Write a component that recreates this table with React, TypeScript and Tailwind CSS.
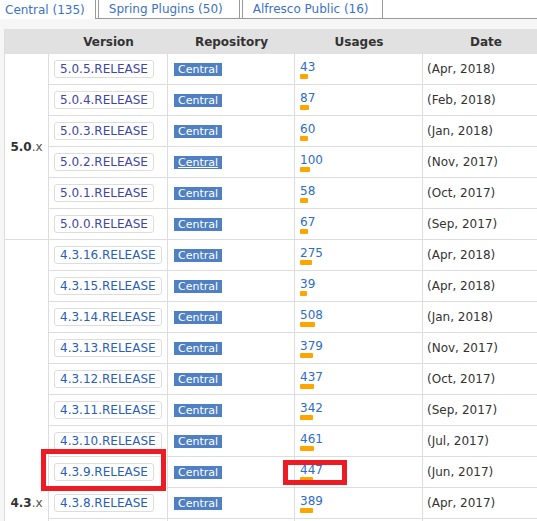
import React from "react";

type Row = { v: string; u: number; w: number; d: string };

const g50: Row[] = [
  { v: "5.0.5.RELEASE", u: 43, w: 8, d: "(Apr, 2018)" },
  { v: "5.0.4.RELEASE", u: 87, w: 9, d: "(Feb, 2018)" },
  { v: "5.0.3.RELEASE", u: 60, w: 8, d: "(Jan, 2018)" },
  { v: "5.0.2.RELEASE", u: 100, w: 10, d: "(Nov, 2017)" },
  { v: "5.0.1.RELEASE", u: 58, w: 8, d: "(Oct, 2017)" },
  { v: "5.0.0.RELEASE", u: 67, w: 8, d: "(Sep, 2017)" },
];

const g43: Row[] = [
  { v: "4.3.16.RELEASE", u: 275, w: 12, d: "(Apr, 2018)" },
  { v: "4.3.15.RELEASE", u: 39, w: 7, d: "(Apr, 2018)" },
  { v: "4.3.14.RELEASE", u: 508, w: 15, d: "(Jan, 2018)" },
  { v: "4.3.13.RELEASE", u: 379, w: 13, d: "(Nov, 2017)" },
  { v: "4.3.12.RELEASE", u: 437, w: 14, d: "(Oct, 2017)" },
  { v: "4.3.11.RELEASE", u: 342, w: 13, d: "(Sep, 2017)" },
  { v: "4.3.10.RELEASE", u: 461, w: 14, d: "(Jul, 2017)" },
  { v: "4.3.9.RELEASE", u: 447, w: 13, d: "(Jun, 2017)" },
  { v: "4.3.8.RELEASE", u: 389, w: 13, d: "(Apr, 2017)" },
  { v: "4.3.7.RELEASE", u: 412, w: 14, d: "(Mar, 2017)" },
  { v: "4.3.6.RELEASE", u: 520, w: 15, d: "(Jan, 2017)" },
  { v: "4.3.5.RELEASE", u: 301, w: 12, d: "(Dec, 2016)" },
  { v: "4.3.4.RELEASE", u: 388, w: 13, d: "(Nov, 2016)" },
  { v: "4.3.3.RELEASE", u: 196, w: 11, d: "(Sep, 2016)" },
  { v: "4.3.2.RELEASE", u: 349, w: 13, d: "(Jul, 2016)" },
  { v: "4.3.1.RELEASE", u: 215, w: 12, d: "(Jul, 2016)" },
  { v: "4.3.0.RELEASE", u: 248, w: 12, d: "(Jun, 2016)" },
];

function Group({
  major,
  rows,
  visited,
  hoverIndex,
}: {
  major: string;
  rows: Row[];
  visited: boolean;
  hoverIndex?: number;
}) {
  return (
    <div className="flex">
      <div className="w-[44px] shrink-0 border-r border-b border-[#dddddd] flex items-center justify-center text-[12px]">
        <span className="font-bold text-[#333333]">{major}</span>
        <span className="text-[#555555]">.x</span>
      </div>
      <div className="flex flex-col">
        {rows.map((r, i) => (
          <div key={r.v} className="flex h-[31px] border-b border-[#dddddd]">
            <div className="w-[119px] shrink-0 border-r border-[#dddddd] flex items-center pl-[5px]">
              <span
                className={
                  "h-[18px] leading-[16px] px-[5px] border border-[#dddddd] rounded-[3px] bg-white text-[12px] " +
                  (visited ? "text-[#3f46a6]" : "text-[#2860b8]")
                }
              >
                {r.v}
              </span>
            </div>
            <div className="w-[127px] shrink-0 border-r border-[#dddddd] flex items-center pl-[6px]">
              <span
                className={
                  "h-[13px] leading-[13px] px-[4px] bg-[#4f80c3] text-white text-[11px] " +
                  (hoverIndex === i ? "underline" : "")
                }
              >
                Central
              </span>
            </div>
            <div className="w-[128px] shrink-0 border-r border-[#dddddd] flex flex-col justify-center pl-[5px]">
              <span className="text-[12px] leading-[14px] text-[#2e6dc8]">{r.u}</span>
              <span
                className="block h-[5px] bg-[#ffa500] rounded-[1px]"
                style={{ width: `${r.w}px` }}
              />
            </div>
            <div className="w-[126px] shrink-0 flex items-center pl-[4px] text-[12px] text-[#333333]">
              {r.d}
            </div>
          </div>
        ))}
      </div>
    </div>
  );
}

export default function App() {
  return (
    <div className="relative w-[537px] h-[521px] overflow-hidden bg-[#f6f6f6] font-['DejaVu_Sans',sans-serif]">
      <div className="flex h-[19px] border-b border-[#999999] bg-white text-[12px] text-[#3c72c9]">
        <div className="h-[19px] -mb-px bg-white border-r border-[#999999] pl-[5px] pr-[10px] flex items-center">
          Central (135)
        </div>
        <div className="ml-[2px] border-l border-r border-[#999999] pl-[10px] pr-[16px] flex items-center">
          Spring Plugins (50)
        </div>
        <div className="ml-[2px] border-l border-r border-[#999999] pl-[10px] pr-[13px] flex items-center">
          Alfresco Public (16)
        </div>
      </div>
      <div className="pt-[10px] pl-[4px]">
        <div className="w-[545px] border-l border-[#dddddd] bg-white">
          <div className="flex h-[25px] bg-[#e1e1e1] text-[12px] font-bold text-[#333333]">
            <div className="w-[44px]" />
            <div className="w-[119px] flex items-center justify-center">Version</div>
            <div className="w-[127px] flex items-center justify-center">Repository</div>
            <div className="w-[128px] flex items-center justify-center">Usages</div>
            <div className="w-[126px] flex items-center justify-center">Date</div>
          </div>
          <Group major="5.0" rows={g50} visited hoverIndex={3} />
          <Group major="4.3" rows={g43} visited={false} />
        </div>
      </div>
      <div className="absolute left-[41px] top-[449px] w-[125px] h-[42px] border-[5px] border-[#ed1c24]" />
      <div className="absolute left-[283px] top-[460px] w-[64px] h-[25px] border-[5px] border-[#ed1c24]" />
    </div>
  );
}
